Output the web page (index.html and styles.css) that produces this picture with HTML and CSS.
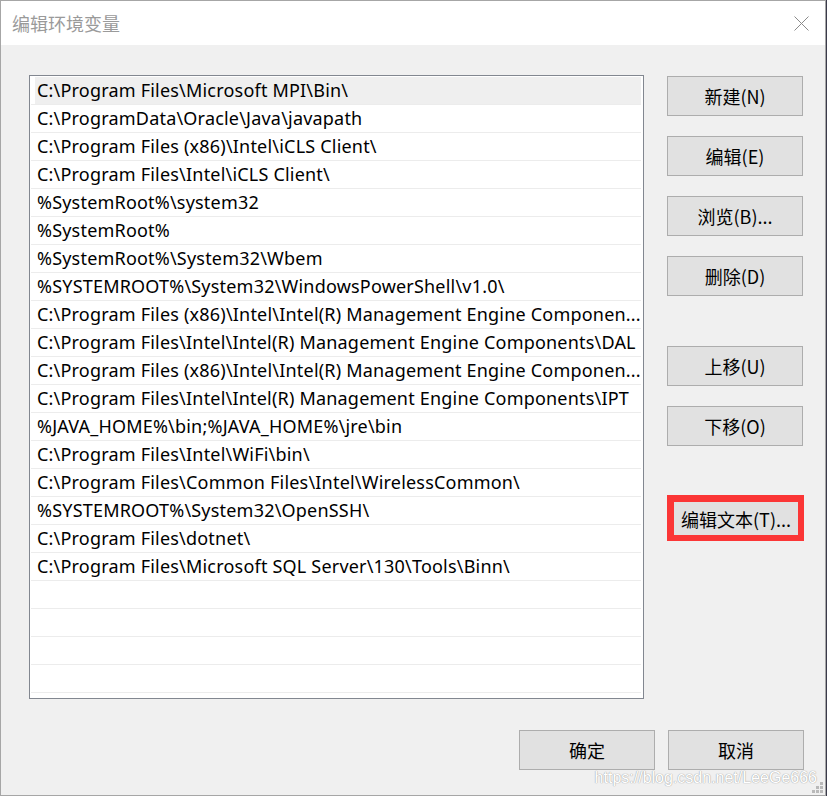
FILE: index.html
```html
<!DOCTYPE html>
<html lang="zh-CN">
<head>
    <meta charset="UTF-8">
    <meta name="viewport" content="width=device-width, initial-scale=1.0">
    <title>编辑环境变量</title>
    <link rel="stylesheet" href="styles.css">
</head>
<body>
    <div class="window">
        <div class="title-bar">
            <span class="title">编辑环境变量</span>
            <span class="close-btn">
                <svg width="15" height="15" viewBox="0 0 15 15">
                    <path d="M0.5 0.5 L14.5 14.5 M14.5 0.5 L0.5 14.5" stroke="#8a8a8a" stroke-width="1" fill="none"/>
                </svg>
            </span>
        </div>

        <div class="dialog-body">
            <div class="main-row">
                <!-- Path list -->
                <div class="path-list">
                    <div class="path-row selected">C:\Program Files\Microsoft MPI\Bin\</div>
                    <div class="path-row">C:\ProgramData\Oracle\Java\javapath</div>
                    <div class="path-row">C:\Program Files (x86)\Intel\iCLS Client\</div>
                    <div class="path-row">C:\Program Files\Intel\iCLS Client\</div>
                    <div class="path-row">%SystemRoot%\system32</div>
                    <div class="path-row">%SystemRoot%</div>
                    <div class="path-row">%SystemRoot%\System32\Wbem</div>
                    <div class="path-row">%SYSTEMROOT%\System32\WindowsPowerShell\v1.0\</div>
                    <div class="path-row">C:\Program Files (x86)\Intel\Intel(R) Management Engine Componen...</div>
                    <div class="path-row">C:\Program Files\Intel\Intel(R) Management Engine Components\DAL</div>
                    <div class="path-row">C:\Program Files (x86)\Intel\Intel(R) Management Engine Componen...</div>
                    <div class="path-row">C:\Program Files\Intel\Intel(R) Management Engine Components\IPT</div>
                    <div class="path-row">%JAVA_HOME%\bin;%JAVA_HOME%\jre\bin</div>
                    <div class="path-row">C:\Program Files\Intel\WiFi\bin\</div>
                    <div class="path-row">C:\Program Files\Common Files\Intel\WirelessCommon\</div>
                    <div class="path-row">%SYSTEMROOT%\System32\OpenSSH\</div>
                    <div class="path-row">C:\Program Files\dotnet\</div>
                    <div class="path-row">C:\Program Files\Microsoft SQL Server\130\Tools\Binn\</div>
                    <div class="path-row"></div>
                    <div class="path-row"></div>
                    <div class="path-row"></div>
                    <div class="path-row"></div>
                    <div class="path-row"></div>
                </div>

                <!-- Side buttons -->
                <div class="side-buttons">
                    <div class="btn-group">
                        <button class="btn">新建(N)</button>
                        <button class="btn">编辑(E)</button>
                        <button class="btn">浏览(B)...</button>
                        <button class="btn">删除(D)</button>
                    </div>
                    <div class="btn-group">
                        <button class="btn">上移(U)</button>
                        <button class="btn">下移(O)</button>
                    </div>
                    <div class="btn-group">
                        <button class="btn btn-marked">编辑文本(T)...</button>
                    </div>
                </div>
            </div>

            <div class="footer">
                <button class="btn">确定</button>
                <button class="btn">取消</button>
            </div>
        </div>

        <span class="watermark">https://blog.csdn.net/LeeGe666</span>
        <span class="grip">
            <svg width="12" height="12" viewBox="0 0 12 12" fill="#b9b9b9">
                <rect x="8" y="0" width="3" height="3"/>
                <rect x="4" y="4" width="3" height="3"/>
                <rect x="8" y="4" width="3" height="3"/>
                <rect x="0" y="8" width="3" height="3"/>
                <rect x="4" y="8" width="3" height="3"/>
                <rect x="8" y="8" width="3" height="3"/>
            </svg>
        </span>
    </div>
</body>
</html>
```

FILE: styles.css
```css
* {
    box-sizing: border-box;
}

body {
    margin: 0;
    background-color: #3a3a4a;
    font-family: "Noto Sans", "Noto Sans CJK SC", sans-serif;
}

.window {
    position: relative;
    width: 826px;
    height: 796px;
    border: 1px solid #a6a6a6;
    background-color: #f0f0f0;
    display: flex;
    flex-direction: column;
}

.title-bar {
    height: 44px;
    background-color: white;
    display: flex;
    align-items: center;
    justify-content: space-between;
    padding: 0 16px 0 11px;
}

.title {
    font-family: "Noto Sans CJK SC", sans-serif;
    font-size: 18px;
    color: #9a9a9a;
}

.close-btn {
    display: flex;
    margin-top: 1px;
}

.dialog-body {
    flex: 1;
    padding: 30px 21px 0 28px;
}

.main-row {
    display: flex;
    gap: 23px;
}

.path-list {
    width: 616px;
    height: 624px;
    background-color: white;
    border: 1px solid #828790;
    padding: 1px 2px 0 1px;
    overflow: hidden;
}

.path-row {
    height: 28px;
    line-height: 27px;
    padding-left: 6px;
    border-bottom: 1px solid #ececec;
    font-size: 18px;
    letter-spacing: 0.2px;
    color: #000;
    white-space: nowrap;
    overflow: hidden;
}

.path-row.selected {
    background: linear-gradient(#efefef, #efefef) 4px 0 / calc(100% - 4px) 27px no-repeat;
}

.side-buttons {
    display: flex;
    flex-direction: column;
    gap: 50px;
    padding-top: 1px;
}

.btn-group {
    display: flex;
    flex-direction: column;
    gap: 20px;
}

.btn {
    width: 136px;
    height: 40px;
    background-color: #e1e1e1;
    border: 1px solid #adadad;
    font-family: "Noto Sans CJK SC", sans-serif;
    font-size: 18px;
    color: #000;
    padding: 0;
}

.btn-marked {
    height: 46px;
    margin-top: -1px;
    width: 137px;
    border-style: solid;
    border-color: #fb3636;
    border-width: 7px 6px 6px 7px;
}

.footer {
    display: flex;
    justify-content: flex-end;
    gap: 13px;
    margin-top: 31px;
}

.watermark {
    position: absolute;
    right: 8px;
    bottom: 8px;
    font-family: "Liberation Sans", Arial, sans-serif;
    font-size: 16px;
    color: #fff;
    text-shadow: 0 0 1px #9a9a9a, 0 0 1px #b0b0b0;
}

.grip {
    position: absolute;
    right: 1px;
    bottom: 1px;
    display: flex;
}
```
